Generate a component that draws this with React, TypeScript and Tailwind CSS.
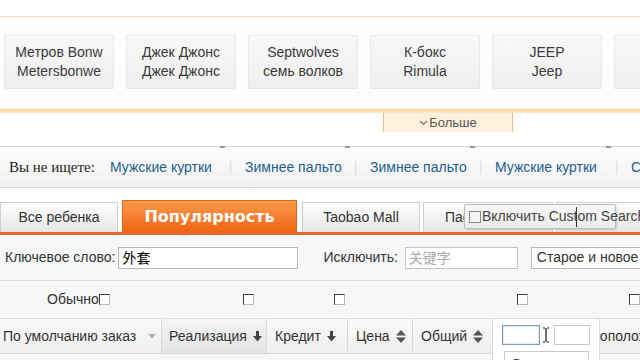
import React from "react";

const Checkbox = () => (
  <div className="w-[11px] h-[11px] bg-white border border-t-[#3f3f3f] border-l-[#3f3f3f] border-r-[#b8b8b8] border-b-[#b8b8b8] shrink-0" />
);

const DownArrow = () => (
  <svg width="9" height="11" viewBox="0 0 9 11" className="ml-[6px] shrink-0">
    <rect x="3" y="0" width="3" height="6" fill="#444" />
    <path d="M0 5 L9 5 L4.5 10.5 Z" fill="#444" />
  </svg>
);

const UpDown = () => (
  <svg width="10" height="13" viewBox="0 0 10 13" className="ml-[6px] shrink-0">
    <path d="M5 0 L10 5.5 L0 5.5 Z" fill="#555" />
    <path d="M0 7.5 L10 7.5 L5 13 Z" fill="#555" />
  </svg>
);

const brands: [string, string][] = [
  ["Метров Bonw", "Metersbonwe"],
  ["Джек Джонс", "Джек Джонс"],
  ["Septwolves", "семь волков"],
  ["К-бокс", "Rimula"],
  ["JEEP", "Jeep"],
  ["", "другие"],
];

const Sep = () => (
  <span className="w-[29px] shrink-0 text-center text-[#dcdcdc]">|</span>
);

export default function App() {
  return (
    <div
      className="w-[640px] h-[360px] overflow-hidden bg-white relative text-[#333] whitespace-nowrap"
      style={{ fontFamily: '"Liberation Sans", Arial, sans-serif' }}
    >
      {/* top */}
      <div className="h-[16px] bg-white" />
      {/* brand panel */}
      <div className="h-[92px] border-t border-[#f4dfb8] bg-[#fdfdfd] overflow-hidden">
        <div className="flex gap-[12px] pl-[4px] pt-[18px] w-[760px]">
          {brands.map((b, i) => (
            <div
              key={i}
              className="w-[110px] h-[54px] shrink-0 border border-[#e8e8e8] bg-gradient-to-b from-[#f8f8f8] to-[#efefef] flex flex-col items-center justify-center text-[14px] leading-[19px] text-[#3a3a3a]"
            >
              <div>{b[0] || "\u00a0"}</div>
              <div className={b[0] ? "" : "pl-[20px]"}>{b[1]}</div>
            </div>
          ))}
        </div>
      </div>
      <div className="h-[5px] bg-gradient-to-b from-[#fcefd6] via-[#f6d7a0] to-[#fbebd0]" />
      {/* more tab */}
      <div className="h-[33px]">
        <div className="ml-[383px] w-[130px] h-[19px] bg-[#fdf1dc] border-x border-[#dcc58f] flex items-center justify-center text-[13px] text-[#555]">
          <svg width="9" height="6" viewBox="0 0 9 6" className="mr-[1px] mt-[1px]">
            <path d="M1 1 L4.5 4.5 L8 1" stroke="#777" strokeWidth="1.2" fill="none" />
          </svg>
          Больше
        </div>
      </div>
      {/* not searching bar */}
      <div className="h-[42px] border-y border-[#d6d6d6] bg-gradient-to-b from-[#ffffff] to-[#efefef] flex items-center relative">
        <span
          className="ml-[9px] w-[101px] shrink-0 text-[15px] text-[#222]"
          style={{ fontFamily: '"Liberation Serif", "Times New Roman", serif' }}
        >
          Вы не ищете:
        </span>
        <div className="flex items-center text-[14px] text-[#1e5f8e] shrink-0">
          <span className="w-[106px] shrink-0">Мужские куртки</span>
          <Sep />
          <span className="w-[96px] shrink-0">Зимнее пальто</span>
          <Sep />
          <span className="w-[96px] shrink-0">Зимнее пальто</span>
          <Sep />
          <span className="w-[107px] shrink-0">Мужские куртки</span>
          <Sep />
          <span>Синий</span>
        </div>
        <div className="absolute left-[220px] top-[-1px] w-[5px] h-[2px] bg-[#8a97a6]" />
        <div className="absolute left-[345px] top-[-1px] w-[5px] h-[2px] bg-[#8a97a6]" />
        <div className="absolute left-[470px] top-[-1px] w-[5px] h-[2px] bg-[#8a97a6]" />
        <div className="absolute left-[606px] top-[-1px] w-[5px] h-[2px] bg-[#8a97a6]" />
      </div>
      {/* tabs */}
      <div className="h-[12px]" />
      <div className="h-[32px] flex items-end relative">
        <div className="w-[118px] shrink-0 h-[30px] border border-b-0 border-[#cfcfcf] bg-gradient-to-b from-[#ffffff] to-[#e6e6e6] flex items-center justify-center text-[14px] text-[#333]">
          Все ребенка
        </div>
        <div
          className="ml-[4px] w-[175px] shrink-0 h-[32px] border border-b-0 border-[#e0651f] bg-gradient-to-b from-[#f99a4a] to-[#f0620e] flex items-center justify-center text-[16px] font-bold text-white"
          style={{ fontFamily: '"DejaVu Sans", Verdana, sans-serif' }}
        >
          Популярность
        </div>
        <div className="ml-[5px] w-[118px] shrink-0 h-[30px] border border-b-0 border-[#cfcfcf] bg-gradient-to-b from-[#ffffff] to-[#e6e6e6] flex items-center justify-center text-[14px] text-[#333]">
          Taobao Mall
        </div>
        <div className="ml-[3px] w-[130px] shrink-0 h-[30px] border border-b-0 border-[#cfcfcf] bg-gradient-to-b from-[#ffffff] to-[#e6e6e6] flex items-center pl-[21px] text-[14px] text-[#333] overflow-hidden">
          Пасхальные
        </div>
        <div className="ml-[3px] w-[100px] shrink-0 h-[30px] border border-b-0 border-[#cfcfcf] bg-gradient-to-b from-[#ffffff] to-[#e6e6e6]" />
        {/* tooltip */}
        <div className="absolute left-[464px] top-[4px] w-[152px] h-[25px] bg-gradient-to-b from-[#f7f7f7] to-[#ececec] border border-[#bdbdbd] rounded-[2px] shadow-[1px_1px_2px_rgba(0,0,0,0.15)] flex items-center pl-[4px] text-[14px] text-[#444]">
          <div className="w-[12px] h-[12px] border border-[#8c8c8c] bg-[#f4f4f4] mr-[1px] shrink-0" />
          Включить Custom Search
          <div className="absolute left-[111px] top-[2px] w-[1px] h-[20px] bg-[#333]" />
        </div>
      </div>
      <div className="h-[3px] bg-[#e86a2a]" />
      {/* form area */}
      <div className="bg-[#f6f7f9]">
        <div className="h-[46px] flex items-center text-[14px] text-[#333] border-b border-[#dedede]">
          <span className="ml-[5px] shrink-0">Ключевое слово:</span>
          <div
            className="ml-[3px] w-[180px] shrink-0 h-[22px] bg-white border border-[#b9b9b9] flex items-center pl-[3px] text-[14px] text-black"
            style={{ fontFamily: '"Noto Sans CJK SC", sans-serif' }}
          >
            外套
          </div>
          <span className="ml-[25px] shrink-0">Исключить:</span>
          <div
            className="ml-[7px] w-[113px] shrink-0 h-[22px] bg-white border border-[#c4c4c4] flex items-center pl-[3px] text-[14px] text-[#aaa]"
            style={{ fontFamily: '"Noto Sans CJK SC", sans-serif' }}
          >
            关键字
          </div>
          <div className="ml-[13px] w-[120px] h-[22px] shrink-0 bg-white border border-[#b9b9b9] flex items-center pl-[5px]">
            Старое и новое
          </div>
        </div>
        <div className="h-[38px] flex items-center text-[14px] text-[#333] border-b border-[#dedede]">
          <span className="ml-[47px] shrink-0">Обычно</span>
          <Checkbox />
          <div className="ml-[133px]"><Checkbox /></div>
          <div className="ml-[80px]"><Checkbox /></div>
          <div className="ml-[172px]"><Checkbox /></div>
          <div className="ml-[101px]"><Checkbox /></div>
        </div>
        <div className="h-[35px] flex items-stretch text-[14px] text-[#333] border-b border-[#d8d8d8] relative">
          <div className="w-[162px] shrink-0 bg-gradient-to-b from-[#fafafa] to-[#eeeeee] border-r border-[#d9d9d9] flex items-center pl-[3px]">
            По умолчанию заказ
            <svg width="8" height="5" viewBox="0 0 8 5" className="ml-[12px]">
              <path d="M0 0 L8 0 L4 4.5 Z" fill="#aaa" />
            </svg>
          </div>
          <div className="w-[105px] shrink-0 bg-gradient-to-b from-[#f4f4f4] to-[#e3e3e3] border-r border-[#d9d9d9] flex items-center pl-[7px]">
            Реализация
            <DownArrow />
          </div>
          <div className="w-[81px] shrink-0 bg-gradient-to-b from-[#fafafa] to-[#eeeeee] border-r border-[#d9d9d9] flex items-center pl-[8px]">
            Кредит
            <DownArrow />
          </div>
          <div className="w-[65px] shrink-0 bg-gradient-to-b from-[#fafafa] to-[#eeeeee] border-r border-[#d9d9d9] flex items-center pl-[8px]">
            Цена
            <UpDown />
          </div>
          <div className="w-[78px] shrink-0 bg-gradient-to-b from-[#fafafa] to-[#eeeeee] flex items-center pl-[8px]">
            Общий
            <UpDown />
          </div>
          <div className="w-[200px] shrink-0 bg-gradient-to-b from-[#fafafa] to-[#eeeeee] flex items-center pl-[76px]">
            Местоположение
          </div>
          {/* price popup */}
          <div className="absolute left-[492px] top-[-1px] w-[108px] h-[60px] bg-white border-x border-t border-[#dcdcdc]">
            <div className="flex items-center mt-[6px] ml-[9px]">
              <div className="w-[38px] h-[20px] border border-[#7f9db9] shadow-[inset_0_0_2px_rgba(90,130,200,0.6)] bg-white" />
              <svg width="8" height="16" viewBox="0 0 8 16" className="ml-[2px]">
                <path d="M1 1 H3 M5 1 H7 M4 1 V15 M1 15 H3 M5 15 H7" stroke="#111" strokeWidth="1.2" fill="none" />
              </svg>
              <div className="ml-[4px] w-[36px] h-[20px] border border-[#c9c9c9] bg-white" />
            </div>
            <div className="ml-[11px] mt-[6px] w-[85px] h-[22px] border border-[#c9c9c9] bg-white pl-[6px] pt-[2px] text-[14px] leading-[20px]">
              Определить
            </div>
          </div>
        </div>
        <div className="h-[20px]" />
      </div>
    </div>
  );
}
